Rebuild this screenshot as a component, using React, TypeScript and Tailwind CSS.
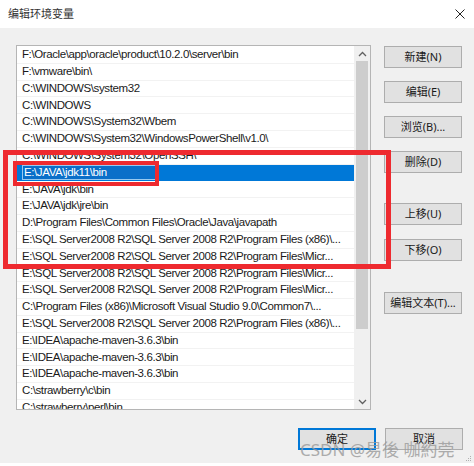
const rows = [
  'F:\\Oracle\\app\\oracle\\product\\10.2.0\\server\\bin',
  'F:\\vmware\\bin\\',
  'C:\\WINDOWS\\system32',
  'C:\\WINDOWS',
  'C:\\WINDOWS\\System32\\Wbem',
  'C:\\WINDOWS\\System32\\WindowsPowerShell\\v1.0\\',
  'C:\\WINDOWS\\System32\\OpenSSH\\',
  'E:\\JAVA\\jdk11\\bin',
  'E:\\JAVA\\jdk\\bin',
  'E:\\JAVA\\jdk\\jre\\bin',
  'D:\\Program Files\\Common Files\\Oracle\\Java\\javapath',
  'E:\\SQL Server2008 R2\\SQL Server 2008 R2\\Program Files (x86)\\...',
  'E:\\SQL Server2008 R2\\SQL Server 2008 R2\\Program Files\\Micr...',
  'E:\\SQL Server2008 R2\\SQL Server 2008 R2\\Program Files\\Micr...',
  'E:\\SQL Server2008 R2\\SQL Server 2008 R2\\Program Files\\Micr...',
  'C:\\Program Files (x86)\\Microsoft Visual Studio 9.0\\Common7\\...',
  'E:\\SQL Server2008 R2\\SQL Server 2008 R2\\Program Files (x86)\\...',
  'E:\\IDEA\\apache-maven-3.6.3\\bin',
  'E:\\IDEA\\apache-maven-3.6.3\\bin',
  'E:\\IDEA\\apache-maven-3.6.3\\bin',
  'C:\\strawberry\\c\\bin',
  'C:\\strawberry\\perl\\bin',
]

const SELECTED = 7

function Btn({ label, focus }: { label: string; focus?: boolean }) {
  return (
    <div
      className={`flex h-[22px] w-[78px] items-center justify-center border bg-[#e1e1e1] text-[11px] text-[#1a1a1a] ${
        focus ? 'border-[#0078d7] shadow-[inset_0_0_0_1px_#0078d7]' : 'border-[#adadad]'
      }`}
    >
      {label}
    </div>
  )
}

export default function App() {
  return (
    <div
      className="relative flex h-[466px] w-[474px] flex-col overflow-hidden bg-white"
      style={{ fontFamily: '"Noto Sans", "Noto Sans CJK SC", sans-serif' }}
    >
      {/* title bar */}
      <div className="flex h-[28px] shrink-0 items-center justify-between bg-white pl-[8px] pr-[9px]">
        <span className="text-[11px] text-[#333]">编辑环境变量</span>
        <svg width="10" height="10" viewBox="0 0 10 10">
          <path d="M0.5 0.5L9.5 9.5M9.5 0.5L0.5 9.5" stroke="#222" strokeWidth="1" />
        </svg>
      </div>

      {/* body */}
      <div className="relative h-[435px] shrink-0 bg-[#f0f0f0]">
        <div className="flex pl-[16px] pt-[17px]">
          {/* list box */}
          <div className="flex h-[365px] w-[355px] border border-[#b5b5b5] bg-white">
            <div
              className="h-full flex-1 overflow-hidden pt-[1px]"
              style={{ fontFamily: '"Liberation Sans", Arial, sans-serif' }}
            >
              {rows.map((r, i) => (
                <div
                  key={i}
                  className={`flex h-[16.8px] items-center whitespace-nowrap pl-[5px] text-[11.5px] tracking-[-0.4px] ${
                    i === SELECTED ? 'bg-[#0078d7] text-white' : 'border-b border-[#f2f2f2] text-[#1a1a1a]'
                  }`}
                >
                  {i === SELECTED ? (
                    <span className="flex h-[15px] w-[134px] items-center border border-[#99c9ef] bg-[#0a6fc9] pl-[1px]">
                      {r}
                    </span>
                  ) : (
                    r
                  )}
                </div>
              ))}
            </div>
            {/* scrollbar */}
            <div className="flex h-full w-[16px] flex-col items-center bg-[#f0f0f0]">
              <div className="flex h-[15px] items-center">
                <svg width="9" height="6" viewBox="0 0 9 6">
                  <path d="M1 5L4.5 1.5L8 5" stroke="#606060" strokeWidth="1.3" fill="none" />
                </svg>
              </div>
              <div className="h-[268px] w-[12px] bg-[#cdcdcd]" />
              <div className="flex-1" />
              <div className="flex h-[15px] items-center">
                <svg width="9" height="6" viewBox="0 0 9 6">
                  <path d="M1 1L4.5 4.5L8 1" stroke="#606060" strokeWidth="1.3" fill="none" />
                </svg>
              </div>
            </div>
          </div>

          {/* right buttons */}
          <div className="ml-[13px] flex flex-col pt-[1px]">
            <Btn label="新建(N)" />
            <div className="h-[13px]" />
            <Btn label="编辑(E)" />
            <div className="h-[13px]" />
            <Btn label="浏览(B)..." />
            <div className="h-[13px]" />
            <Btn label="删除(D)" />
            <div className="h-[30px]" />
            <Btn label="上移(U)" />
            <div className="h-[14px]" />
            <Btn label="下移(O)" />
            <div className="h-[31px]" />
            <Btn label="编辑文本(T)..." />
          </div>
        </div>

        {/* bottom buttons */}
        <div className="mt-[18px] flex gap-[9px] pl-[298px]">
          <Btn label="确定" focus />
          <Btn label="取消" />
        </div>

        {/* resize grip */}
        <div className="absolute bottom-[2px] right-[3px] grid grid-cols-3 gap-[1px]">
          {[0, 0, 1, 0, 1, 1, 1, 1, 1].map((v, i) => (
            <div key={i} className={`h-[1px] w-[1px] ${v ? 'bg-[#b0b0b0]' : ''}`} />
          ))}
        </div>
      </div>

      {/* annotations */}
      <div className="pointer-events-none absolute left-[3px] top-[150px] h-[119px] w-[388px] border-[5px] border-[#ee2a2f]" />
      <div className="pointer-events-none absolute left-[13px] top-[161px] h-[25px] w-[146px] border-[4px] border-[#ee2a2f]" />

      {/* watermark */}
      <div className="pointer-events-none absolute left-[300px] top-[437px] whitespace-nowrap text-[17px] text-[#9a9a9a] opacity-80">
        CSDN @易後 咖約莞
      </div>
    </div>
  )
}
